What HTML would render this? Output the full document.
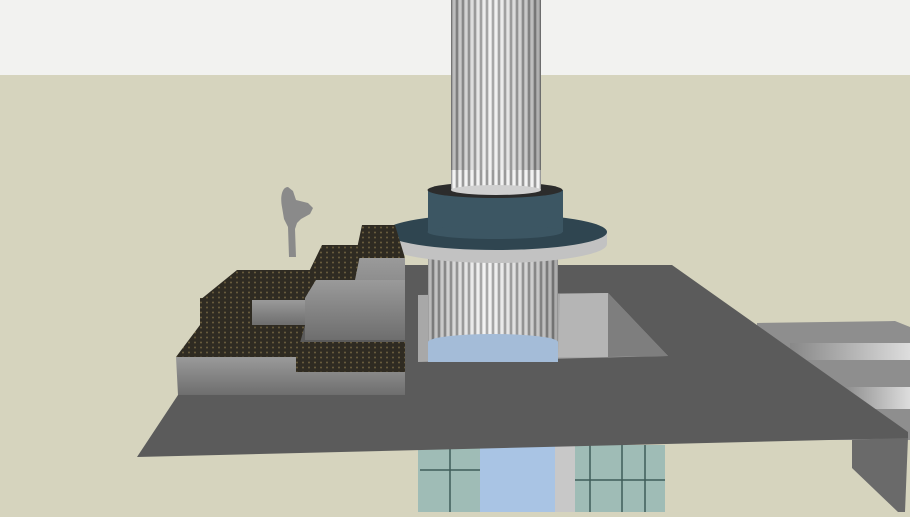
<!DOCTYPE html>
<html><head><style>body{margin:0;width:910px;height:512px;overflow:hidden;background:#d6d4be}</style></head><body>
<svg width="910" height="512" xmlns="http://www.w3.org/2000/svg">
<defs>
<pattern id="fl" width="6" height="90" patternUnits="userSpaceOnUse"><rect width="6" height="90" fill="#d4d4d4"/><rect x="0" width="2" height="90" fill="#9a9a9a"/><rect x="3" width="2" height="90" fill="#f2f2f2"/></pattern>
<linearGradient id="colsh" x1="0" x2="1"><stop offset="0" stop-color="#000" stop-opacity=".25"/><stop offset=".45" stop-color="#fff" stop-opacity=".15"/><stop offset="1" stop-color="#000" stop-opacity=".3"/></linearGradient>
<pattern id="dots" width="6" height="5" patternUnits="userSpaceOnUse"><rect width="6" height="5" fill="#2f2b22"/><circle cx="3" cy="2.5" r="1" fill="#6b5e3e"/></pattern>
<linearGradient id="stone" x1="0" x2="0" y1="0" y2="1"><stop offset="0" stop-color="#9a9a9a"/><stop offset="1" stop-color="#6e6e6e"/></linearGradient>
<linearGradient id="band" x1="0" x2="1"><stop offset="0" stop-color="#888"/><stop offset="1" stop-color="#ddd"/></linearGradient>
</defs>
<rect width="910" height="75" fill="#f2f2f0"/>
<rect y="75" width="910" height="437" fill="#d6d4be"/>
<rect x="418" y="445" width="62" height="67" fill="#9fbcb6"/>
<rect x="575" y="445" width="90" height="67" fill="#9fbcb6"/>
<path d="M420 470H480M575 480H665M450 445V512M590 445V512M622 445V512M645 445V512" stroke="#3f5c58" stroke-width="1.5"/>
<rect x="480" y="445" width="75" height="67" fill="#a9c4e4"/>
<rect x="555" y="445" width="20" height="67" fill="#c8c8c8"/>
<polygon points="757,323 895,321 910,327 910,440 757,440" fill="#8e8e8e"/>
<rect x="790" y="343" width="120" height="17" fill="url(#band)"/>
<rect x="840" y="387" width="70" height="22" fill="url(#band)"/>
<polygon points="852,440 908,437 905,512 898,512 852,468" fill="#6a6a6a"/>
<polygon points="178,395 405,265 672,265 908,432 908,438 137,457" fill="#5b5b5b"/>
<polygon points="418,295 608,293 668,356 418,362" fill="#a8a8a8"/>
<polygon points="560,294 608,293 608,357 558,357" fill="#b5b5b5"/>
<polygon points="608,293 668,356 608,357" fill="#7e7e7e"/>
<rect x="428" y="320" width="130" height="42" fill="#a4bcd8"/>
<rect x="428" y="250" width="130" height="92" fill="url(#fl)"/>
<rect x="428" y="250" width="130" height="92" fill="url(#colsh)"/>
<ellipse cx="493" cy="342" rx="65" ry="8" fill="#a4bcd8"/>
<rect x="451" y="0" width="90" height="195" fill="url(#fl)"/>
<rect x="451" y="0" width="90" height="195" fill="url(#colsh)"/>
<ellipse cx="496" cy="244" rx="111" ry="19" fill="#c2c2c2"/>
<rect x="385" y="232" width="222" height="12" fill="#c2c2c2"/>
<ellipse cx="496" cy="232" rx="111" ry="18" fill="#2f4550"/>
<rect x="428" y="190" width="135" height="42" fill="#3c5663"/>
<ellipse cx="495" cy="232" rx="67.5" ry="7" fill="#3c5663"/>
<ellipse cx="495" cy="190" rx="67.5" ry="8" fill="#2c2c2c"/>
<rect x="451" y="170" width="90" height="20" fill="url(#fl)"/>
<ellipse cx="496" cy="190" rx="45" ry="5" fill="#d0d0d0"/>
<polygon points="362,225 395,225 405,258 355,258" fill="url(#dots)"/>
<rect x="355" y="258" width="50" height="82" fill="url(#stone)"/>
<polygon points="322,245 362,245 355,280 305,280" fill="url(#dots)"/>
<rect x="305" y="280" width="100" height="60" fill="url(#stone)"/>
<polygon points="237,270 322,270 305,298 200,312 200,300" fill="url(#dots)"/>
<rect x="200" y="298" width="105" height="27" fill="url(#dots)"/>
<rect x="252" y="300" width="53" height="25" fill="url(#stone)"/>
<polygon points="200,325 305,325 296,357 176,357" fill="url(#dots)"/>
<polygon points="296,342 405,342 405,372 296,372" fill="url(#dots)"/>
<polygon points="176,357 296,357 296,372 405,372 405,395 178,395" fill="url(#stone)"/>
<path d="M288 187c-6 0-8 10-6 20l2 12 4 8 1 30h7l-1-28 2-6 4-4 9-5 3-6-5-5-12-3-3-9z" fill="#8a8a8a"/>
</svg>
</body></html>
